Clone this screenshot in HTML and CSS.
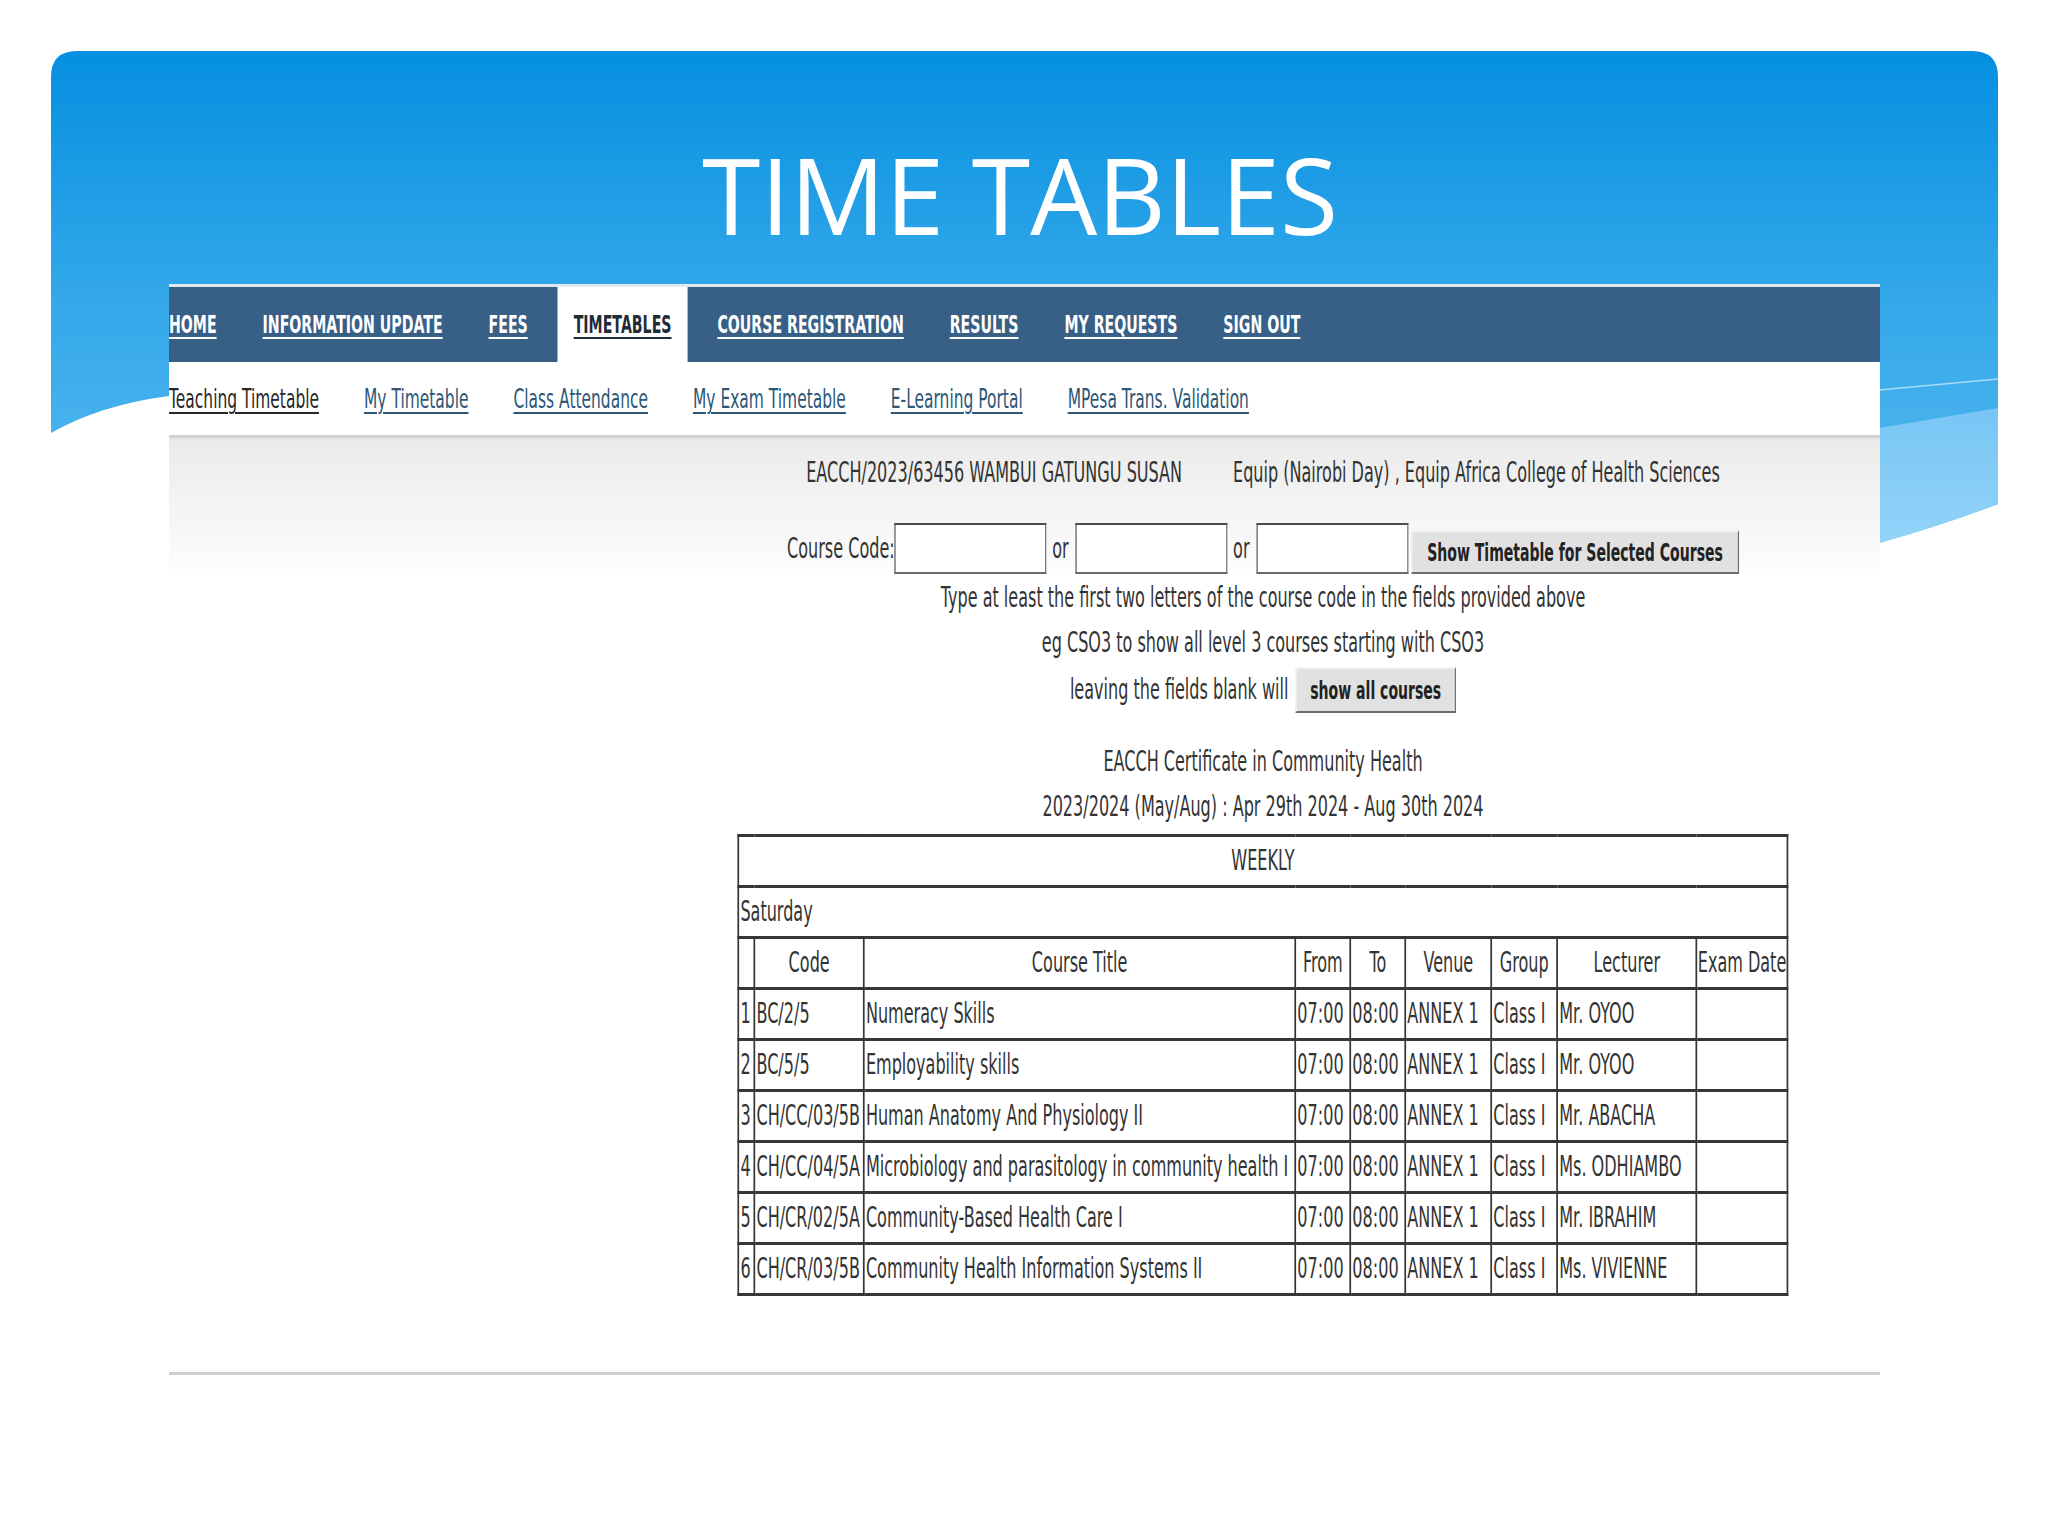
FILE: index.html
```html
<!DOCTYPE html>
<html lang="en">
<head>
<meta charset="utf-8">
<title>TIME TABLES</title>
<link rel="stylesheet" href="styles.css">
</head>
<body>
<div class="slide">
  <svg class="bg" viewBox="0 0 2048 1536" width="2048" height="1536" aria-hidden="true">
    <defs>
      <linearGradient id="sky" x1="0" y1="51" x2="0" y2="545" gradientUnits="userSpaceOnUse">
        <stop offset="0" stop-color="#058fe0"/>
        <stop offset="0.5" stop-color="#33a8ea"/>
        <stop offset="1" stop-color="#57b9ef"/>
      </linearGradient>
      <linearGradient id="band" x1="0" y1="408" x2="0" y2="545" gradientUnits="userSpaceOnUse">
        <stop offset="0" stop-color="#78c5f4"/>
        <stop offset="1" stop-color="#93d4f9"/>
      </linearGradient>
    </defs>
    <path d="M51,77 Q51,51 77,51 L1972,51 Q1998,51 1998,77 L1998,504 Q1940,526 1879,543 L169,396 Q100,405 51,433 Z" fill="url(#sky)"/>
    <path d="M1879,428 L1998,408 L1998,504 Q1940,526 1879,543 Z" fill="url(#band)"/>
    <path d="M1879,390 L1998,379" stroke="#a6dbf8" stroke-width="1.5" fill="none"/>
  </svg>

  <h1 class="title">TIME TABLES</h1>

  <div class="shot">
    <div class="squash">
      <ul class="nav">
        <li><a href="#">HOME</a></li>
        <li><a href="#">INFORMATION UPDATE</a></li>
        <li><a href="#">FEES</a></li>
        <li class="active"><a href="#">TIMETABLES</a></li>
        <li><a href="#">COURSE REGISTRATION</a></li>
        <li><a href="#">RESULTS</a></li>
        <li><a href="#">MY REQUESTS</a></li>
        <li><a href="#">SIGN OUT</a></li>
      </ul>
      <div class="subnav">
        <a href="#" class="visited">Teaching Timetable</a>
        <a href="#">My Timetable</a>
        <a href="#">Class Attendance</a>
        <a href="#">My Exam Timetable</a>
        <a href="#">E-Learning Portal</a>
        <a href="#">MPesa Trans. Validation</a>
      </div>
      <div class="sep"></div>
      <div class="content">
        <div class="side"></div>
        <div class="main">
          <div class="student">
            <span>EACCH/2023/63456 WAMBUI GATUNGU SUSAN</span>
            <span>Equip (Nairobi Day) , Equip Africa College of Health Sciences</span>
          </div>
          <div class="codes">
            <span class="lbl">Course Code:</span>
            <input class="code" type="text">
            <span class="or">or</span>
            <input class="code" type="text">
            <span class="or">or</span>
            <input class="code" type="text">
            <button class="btn btn-show" type="button">Show Timetable for Selected Courses</button>
          </div>
          <div class="line hint1">Type at least the first two letters of the course code in the fields provided above</div>
          <div class="line hint2">eg CSO3 to show all level 3 courses starting with CSO3</div>
          <div class="blank">
            <span>leaving the fields blank will</span>
            <button class="btn btn-all" type="button">show all courses</button>
          </div>
          <div class="line prog">EACCH Certificate in Community Health</div>
          <div class="line term">2023/2024 (May/Aug) : Apr 29th 2024 - Aug 30th 2024</div>
          <table class="tt">
            <colgroup>
              <col class="c-num"><col class="c-code"><col class="c-title"><col class="c-from"><col class="c-to"><col class="c-venue"><col class="c-group"><col class="c-lect"><col class="c-exam">
            </colgroup>
            <tr><td colspan="9" class="center">WEEKLY</td></tr>
            <tr><td colspan="9">Saturday</td></tr>
            <tr class="head">
              <td></td><td>Code</td><td>Course Title</td><td>From</td><td>To</td><td>Venue</td><td>Group</td><td>Lecturer</td><td>Exam Date</td>
            </tr>
            <tr><td>1</td><td>BC/2/5</td><td>Numeracy Skills</td><td>07:00</td><td>08:00</td><td>ANNEX 1</td><td>Class I</td><td>Mr. OYOO</td><td></td></tr>
            <tr><td>2</td><td>BC/5/5</td><td>Employability skills</td><td>07:00</td><td>08:00</td><td>ANNEX 1</td><td>Class I</td><td>Mr. OYOO</td><td></td></tr>
            <tr><td>3</td><td>CH/CC/03/5B</td><td>Human Anatomy And Physiology II</td><td>07:00</td><td>08:00</td><td>ANNEX 1</td><td>Class I</td><td>Mr. ABACHA</td><td></td></tr>
            <tr><td>4</td><td>CH/CC/04/5A</td><td>Microbiology and parasitology in community health I</td><td>07:00</td><td>08:00</td><td>ANNEX 1</td><td>Class I</td><td>Ms. ODHIAMBO</td><td></td></tr>
            <tr><td>5</td><td>CH/CR/02/5A</td><td>Community-Based Health Care I</td><td>07:00</td><td>08:00</td><td>ANNEX 1</td><td>Class I</td><td>Mr. IBRAHIM</td><td></td></tr>
            <tr><td>6</td><td>CH/CR/03/5B</td><td>Community Health Information Systems II</td><td>07:00</td><td>08:00</td><td>ANNEX 1</td><td>Class I</td><td>Ms. VIVIENNE</td><td></td></tr>
          </table>
        </div>
      </div>
      <div class="rule"></div>
    </div>
  </div>
</div>
</body>
</html>
```
FILE: styles.css
```css
* { box-sizing: border-box; }
html, body { margin: 0; padding: 0; background: #fff; overflow: hidden; }

.slide { position: relative; width: 2048px; height: 1536px; overflow: hidden; background: #fff; }
.bg { position: absolute; left: 0; top: 0; width: 2048px; height: 1536px; }

.title {
  position: relative;
  margin: 0;
  padding: 141px 8px 0 0;
  height: 247px;
  font: 400 106px/106px "Open Sans", "Liberation Sans", sans-serif;
  color: #fff;
  text-align: center;
}

.shot { position: relative; margin: 37px 0 0 169px; width: 1711px; overflow: hidden; background: #fff; }
.squash {
  width: 2986px;
  transform: scaleX(0.573);
  transform-origin: 0 0;
  font-family: "DejaVu Sans", Verdana, sans-serif;
  color: #333;
}

/* top navigation */
.nav {
  display: flex;
  gap: 24.4px;
  height: 78px;
  margin: 0;
  padding: 0;
  list-style: none;
  border-top: 3px solid #e2e8ee;
  background: #386087;
}
.nav li { padding: 0 27.9px; line-height: 75px; font-size: 24.7px; font-weight: 700; }
.nav li:first-child { margin-left: -27.9px; }
.nav a { color: #fff; text-decoration: underline; text-decoration-thickness: 2px; text-underline-offset: 4px; }
.nav li.active { background: #fff; }
.nav li.active a { color: #1f2b37; }

/* sub navigation */
.subnav { display: flex; gap: 78.5px; align-items: center; height: 73px; font-size: 27px; }
.subnav a { color: #2d5677; text-decoration: underline; text-decoration-thickness: 2px; text-underline-offset: 4px; }
.subnav a.visited { color: #272727; }

.sep { height: 5px; border-top: 3px solid #d2d2d2; background: #e5e5e5; }

/* content */
.content {
  display: grid;
  grid-template-columns: 832.5px 1fr;
  background: linear-gradient(#ebebeb 0, #fbfbfb 120px, #fff 135px);
}
.main { display: flex; flex-direction: column; align-items: center; font-size: 28px; line-height: 40px; }

.student { display: flex; gap: 89px; margin-top: 13px; white-space: nowrap; }

.codes { display: flex; align-items: flex-end; height: 51px; margin-top: 30px; white-space: nowrap; }
.lbl, .or { line-height: 51px; }
.or { margin: 0 12px 0 10px; }
.code {
  width: 265px;
  height: 51px;
  margin: 0;
  border: 2px solid #6a6a6a;
  border-top-color: #4d4d4d;
  border-left-color: #4d4d4d;
  background: #fff;
}
.btn {
  margin: 0;
  font-family: "DejaVu Sans", Verdana, sans-serif;
  font-size: 24.5px;
  font-weight: 700;
  color: #222;
  background: #e1e1e1;
  border: 2px solid;
  border-color: #f4f4f4 #6c6c6c #6c6c6c #f4f4f4;
}
.btn-show { height: 44px; margin-left: 5px; padding: 0 26px; }
.btn-all { height: 46px; margin-left: 12px; padding: 0 24px; }

.line { white-space: nowrap; }
.hint1 { margin-top: 4px; }
.hint2 { margin-top: 5px; }
.blank { display: flex; align-items: center; margin-top: 4px; height: 46px; white-space: nowrap; }
.prog { margin-top: 29px; }
.term { margin-top: 5px; }

/* timetable */
.tt {
  margin-top: 7px;
  width: 1831px;
  table-layout: fixed;
  border-collapse: collapse;
  font-size: 28px;
  line-height: 32px;
  color: #333;
}
.tt td {
  height: 51px;
  padding: 0 0 0 2px;
  border: 3px solid #363636;
  white-space: nowrap;
  overflow: hidden;
  vertical-align: middle;
}
.tt td.center, .tt tr.head td { text-align: center; padding: 0; }
.c-num { width: 28px; }
.c-code { width: 191px; }
.c-title { width: 753px; }
.c-from { width: 96px; }
.c-to { width: 96px; }
.c-venue { width: 150px; }
.c-group { width: 115px; }
.c-lect { width: 243px; }
.c-exam { width: 159px; }

.rule { margin-top: 76px; height: 3px; background: #cdcdcd; }
```
